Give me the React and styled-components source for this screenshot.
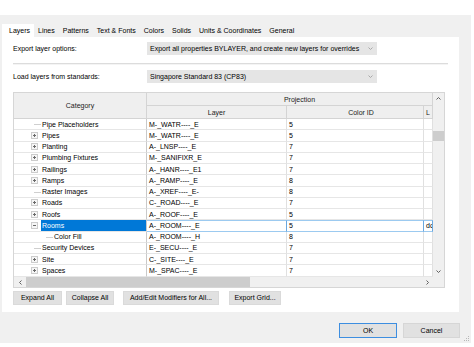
import React from 'react';
import styled, { createGlobalStyle } from 'styled-components';

const GlobalStyle = createGlobalStyle`
  html, body { margin: 0; padding: 0; background: #ffffff; }
  body {
    font-family: "Liberation Sans", Arial, sans-serif;
    font-size: 7px;
    color: #000;
  }
  * { box-sizing: border-box; }
`;

const Dialog = styled.div`
  position: relative;
  margin-top: 15px;
  width: 471px;
  height: 328px;
  background: #f0f0f0;
  padding: 9px 12px 0 2px;
  display: flex;
  flex-direction: column;
`;

const TabStrip = styled.div`
  display: flex;
  height: 13px;
`;

const Tab = styled.div`
  height: 13px;
  line-height: 13px;
  padding: ${(p) => (p.$active ? '0 4px 0 7px' : '0 4px')};
  background: ${(p) => (p.$active ? '#ffffff' : 'transparent')};
  white-space: nowrap;
`;

const Panel = styled.div`
  width: 457px;
  height: 275px;
  background: #ffffff;
  padding: 5px 0 0 11px;
  display: flex;
  flex-direction: column;
`;

const OptionRow = styled.div`
  display: flex;
  align-items: center;
  height: 13px;
`;

const OptionLabel = styled.div`
  width: 134px;
`;

const Combo = styled.div`
  width: 230px;
  height: 13px;
  background: #e5e5e5;
  display: flex;
  align-items: center;
  justify-content: space-between;
  padding: 0 4px 0 3px;
  white-space: nowrap;
`;

const Separator = styled.div`
  width: 435px;
  height: 2px;
  margin: 8px 0 5px;
  border-top: 1px solid #dcdcdc;
  border-bottom: 1px solid #f4f4f4;
`;

const Grid = styled.div`
  display: grid;
  grid-template-columns: 133px 140px 137px 9px 11px;
  grid-template-rows: 13px 13px repeat(14, 11.25px) 10px;
  border: 1px solid #d6d6d6;
  margin-top: 9px;
  width: 432px;
`;

const HeaderCell = styled.div`
  grid-row: ${(p) => p.$row || 'auto'};
  grid-column: ${(p) => p.$col || 'auto'};
  background: #efefef;
  border-right: 1px solid #d4d4d4;
  border-bottom: 1px solid #d4d4d4;
  display: flex;
  align-items: center;
  justify-content: center;
  padding-left: ${(p) => p.$shift || 0}px;
  color: #1a1a1a;
  white-space: nowrap;
  overflow: hidden;
`;

const Cell = styled.div`
  display: flex;
  align-items: center;
  padding-left: 2px;
  background: #fff;
  white-space: nowrap;
  overflow: hidden;
  border-bottom: 1px solid ${(p) => (p.$sel ? '#9ccaf0' : '#e6e6e6')};
  border-top: ${(p) => (p.$sel ? '1px solid #9ccaf0' : 'none')};
  border-right: 1px solid ${(p) => (p.$sel ? '#6aa8e0' : '#e0e0e0')};
`;

const CategoryCell = styled.div`
  display: flex;
  align-items: stretch;
  padding-left: 15px;
  background: #fff;
  border-bottom: 1px solid #e6e6e6;
  border-right: 1px solid #c9c9c9;
  white-space: nowrap;
  overflow: hidden;
`;

const Indent = styled.div`
  width: ${(p) => p.$level * 12}px;
  flex: none;
`;

const ExpanderSlot = styled.div`
  position: relative;
  width: 12px;
  flex: none;
  display: flex;
  align-items: center;
`;

const Connector = styled.div`
  position: absolute;
  left: 5px;
  right: 0;
  top: 50%;
  border-top: 1px solid #cfcfcf;
`;

const CatLabel = styled.div`
  flex: 1;
  display: flex;
  align-items: center;
  padding-left: 1px;
  background: ${(p) => (p.$sel ? '#0078d7' : 'transparent')};
  color: ${(p) => (p.$sel ? '#ffffff' : '#000')};
`;

const VScroll = styled.div`
  grid-column: 5;
  grid-row: 1 / span 16;
  background: #f0f0f0;
  display: flex;
  flex-direction: column;
  align-items: stretch;
`;

const ArrowBox = styled.div`
  height: ${(p) => p.$h || 11}px;
  width: ${(p) => p.$w || 'auto'};
  flex: none;
  display: flex;
  align-items: center;
  justify-content: center;
`;

const VTrack = styled.div`
  flex: 1;
  padding-top: 27px;
`;

const VThumb = styled.div`
  height: 10px;
  background: #cdcdcd;
`;

const HScroll = styled.div`
  grid-column: 1 / span 4;
  grid-row: 17;
  background: #f0f0f0;
  display: flex;
  align-items: stretch;
`;

const HThumb = styled.div`
  width: 224px;
  background: #cdcdcd;
`;

const HSpacer = styled.div`
  flex: 1;
`;

const Corner = styled.div`
  grid-column: 5;
  grid-row: 17;
  background: #f0f0f0;
`;

const ButtonRow = styled.div`
  display: flex;
  margin-top: 3px;
  height: 14px;
`;

const GridButton = styled.div`
  width: ${(p) => p.$w}px;
  margin-left: ${(p) => p.$ml || 0}px;
  background: #e1e1e1;
  border: 1px solid #dadada;
  display: flex;
  align-items: center;
  justify-content: center;
  white-space: nowrap;
`;

const Footer = styled.div`
  display: flex;
  justify-content: flex-end;
  gap: 6px;
  margin-top: 11px;
  margin-right: -1px;
`;

const DialogButton = styled.div`
  width: ${(p) => p.$w}px;
  height: 15px;
  background: #e1e1e1;
  border: 1px solid ${(p) => (p.$default ? '#3d8ee0' : '#d6d6d6')};
  display: flex;
  align-items: center;
  justify-content: center;
`;

const Grip = styled.svg`
  position: absolute;
  right: 1px;
  bottom: 1px;
`;

const Chevron = ({ dir = 'down', color = '#606060' }) => {
  const pts = {
    down: '0.5,0.5 2.5,2.5 4.5,0.5',
    up: '0.5,2.5 2.5,0.5 4.5,2.5',
    left: '2.5,0.5 0.5,2.5 2.5,4.5',
    right: '0.5,0.5 2.5,2.5 0.5,4.5',
  }[dir];
  const horiz = dir === 'left' || dir === 'right';
  return (
    <svg width={horiz ? 3 : 5} height={horiz ? 5 : 3} viewBox={horiz ? '0 0 3 5' : '0 0 5 3'}>
      <polyline points={pts} fill="none" stroke={color} strokeWidth="1" />
    </svg>
  );
};

const ExpanderBox = ({ open }) => (
  <svg width="7" height="7" viewBox="0 0 7 7" style={{ marginLeft: 2 }}>
    <rect x="0.5" y="0.5" width="6" height="6" fill="#f6f6f6" stroke="#cccccc" />
    <line x1="2" y1="3.5" x2="5" y2="3.5" stroke="#6a6a6a" strokeWidth="1" />
    {!open && <line x1="3.5" y1="2" x2="3.5" y2="5" stroke="#6a6a6a" strokeWidth="1" />}
  </svg>
);

const tabs = ['Layers', 'Lines', 'Patterns', 'Text & Fonts', 'Colors', 'Solids', 'Units & Coordinates', 'General'];

const rows = [
  { name: 'Pipe Placeholders', layer: 'M-_WATR----_E', color: '5', kind: 'leaf' },
  { name: 'Pipes', layer: 'M-_WATR----_E', color: '5', kind: 'closed' },
  { name: 'Planting', layer: 'A-_LNSP----_E', color: '7', kind: 'closed' },
  { name: 'Plumbing Fixtures', layer: 'M-_SANIFIXR_E', color: '7', kind: 'closed' },
  { name: 'Railings', layer: 'A-_HANR----_E1', color: '7', kind: 'closed' },
  { name: 'Ramps', layer: 'A-_RAMP----_E', color: '8', kind: 'closed' },
  { name: 'Raster Images', layer: 'A-_XREF----_E-', color: '8', kind: 'leaf' },
  { name: 'Roads', layer: 'C-_ROAD----_E', color: '7', kind: 'closed' },
  { name: 'Roofs', layer: 'A-_ROOF----_E', color: '5', kind: 'closed' },
  { name: 'Rooms', layer: 'A-_ROOM----_E', color: '5', kind: 'open', sel: true, extra: 'dc' },
  { name: 'Color Fill', layer: 'A-_ROOM----_H', color: '8', kind: 'leaf', level: 1 },
  { name: 'Security Devices', layer: 'E-_SECU----_E', color: '7', kind: 'leaf' },
  { name: 'Site', layer: 'C-_SITE----_E', color: '7', kind: 'closed' },
  { name: 'Spaces', layer: 'M-_SPAC----_E', color: '7', kind: 'closed' },
];

export default function App() {
  return (
    <>
      <GlobalStyle />
      <Dialog>
        <TabStrip>
          {tabs.map((t, i) => (
            <Tab key={t} $active={i === 0}>{t}</Tab>
          ))}
        </TabStrip>
        <Panel>
          <OptionRow>
            <OptionLabel>Export layer options:</OptionLabel>
            <Combo>
              <span>Export all properties BYLAYER, and create new layers for overrides</span>
              <Chevron dir="down" color="#a8a8a8" />
            </Combo>
          </OptionRow>
          <Separator />
          <OptionRow>
            <OptionLabel>Load layers from standards:</OptionLabel>
            <Combo>
              <span>Singapore Standard 83 (CP83)</span>
              <Chevron dir="down" color="#a8a8a8" />
            </Combo>
          </OptionRow>
          <Grid>
            <VScroll>
              <ArrowBox><Chevron dir="up" /></ArrowBox>
              <VTrack><VThumb /></VTrack>
              <ArrowBox><Chevron dir="down" /></ArrowBox>
            </VScroll>
            <HeaderCell $row="span 2">Category</HeaderCell>
            <HeaderCell $col="span 3" $shift={20}>Projection</HeaderCell>
            <HeaderCell>Layer</HeaderCell>
            <HeaderCell $shift={12}>Color ID</HeaderCell>
            <HeaderCell>L</HeaderCell>
            {rows.map((r) => (
              <React.Fragment key={r.name}>
                <CategoryCell>
                  <Indent $level={r.level || 0} />
                  <ExpanderSlot>
                    {r.kind === 'leaf' ? <Connector /> : <ExpanderBox open={r.kind === 'open'} />}
                  </ExpanderSlot>
                  <CatLabel $sel={r.sel}>{r.name}</CatLabel>
                </CategoryCell>
                <Cell $sel={r.sel}>{r.layer}</Cell>
                <Cell $sel={r.sel}>{r.color}</Cell>
                <Cell $sel={r.sel}>{r.extra || ''}</Cell>
              </React.Fragment>
            ))}
            <HScroll>
              <ArrowBox $w="12px"><Chevron dir="left" /></ArrowBox>
              <HThumb />
              <HSpacer />
              <ArrowBox $w="12px"><Chevron dir="right" /></ArrowBox>
            </HScroll>
            <Corner />
          </Grid>
          <ButtonRow>
            <GridButton $w={49}>Expand All</GridButton>
            <GridButton $w={48} $ml={4}>Collapse All</GridButton>
            <GridButton $w={96} $ml={9}>Add/Edit Modifiers for All...</GridButton>
            <GridButton $w={52} $ml={10}>Export Grid...</GridButton>
          </ButtonRow>
        </Panel>
        <Footer>
          <DialogButton $w={58} $default>OK</DialogButton>
          <DialogButton $w={57}>Cancel</DialogButton>
        </Footer>
        <Grip width="6" height="6" viewBox="0 0 6 6">
          <rect x="4" y="0" width="1" height="1" fill="#b8b8b8" />
          <rect x="2" y="2" width="1" height="1" fill="#b8b8b8" />
          <rect x="4" y="2" width="1" height="1" fill="#b8b8b8" />
          <rect x="0" y="4" width="1" height="1" fill="#b8b8b8" />
          <rect x="2" y="4" width="1" height="1" fill="#b8b8b8" />
          <rect x="4" y="4" width="1" height="1" fill="#b8b8b8" />
        </Grip>
      </Dialog>
    </>
  );
}
